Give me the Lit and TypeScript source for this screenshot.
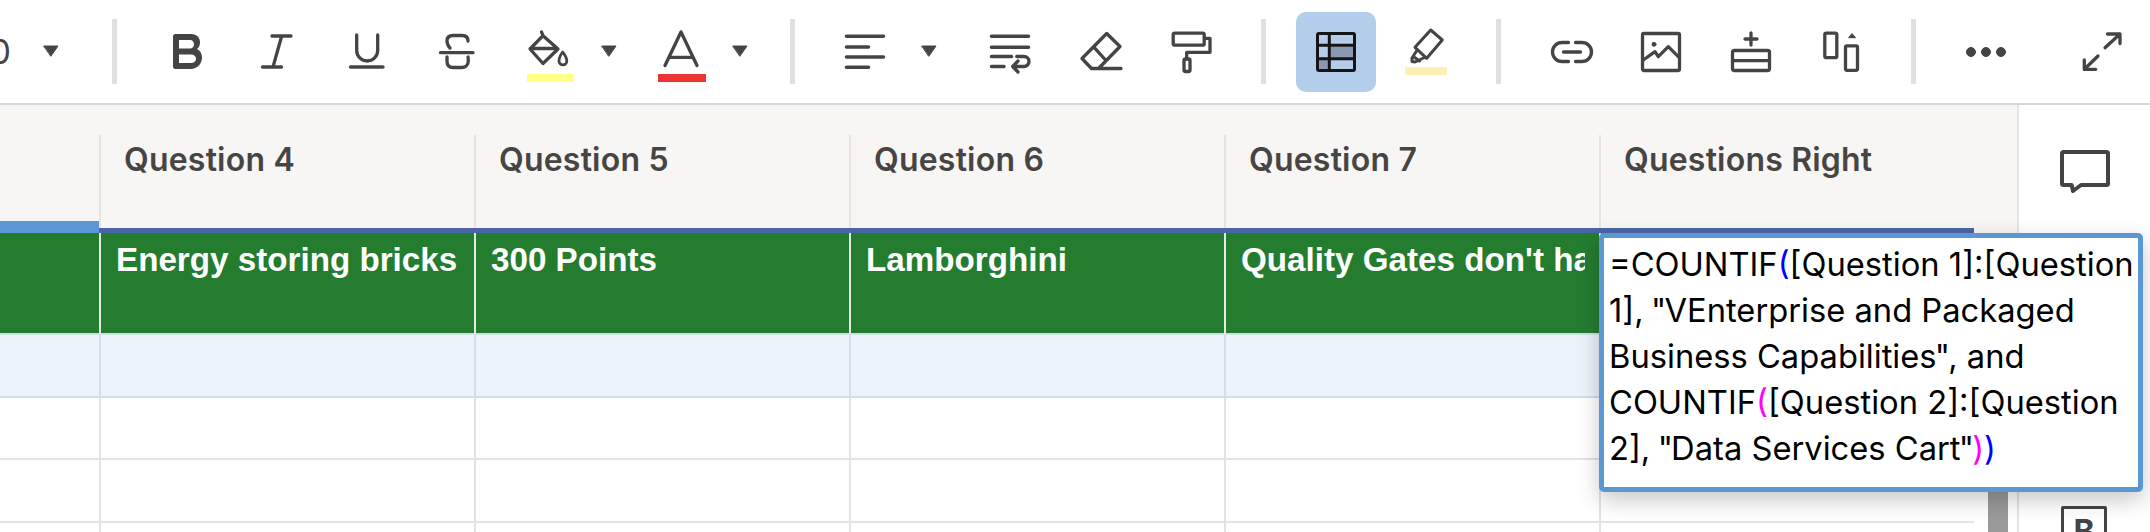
import { LitElement, html, css, svg } from "lit";
import { customElement } from "lit/decorators.js";

const caret = svg`<path class="solid" d="M17 34H31L24 44Z"/>`;

type Item =
  | { kind: "icon"; c: number; art: unknown }
  | { kind: "sep"; left: number }
  | { kind: "active"; c: number; art: unknown };

const ITEMS: Item[] = [
  { kind: "icon", c: 51, art: caret },
  { kind: "sep", left: 112 },
  { kind: "icon", c: 187, art: svg`<path class="solid even" d="M12.5 22H28C34 22 37 26 37 30.5C37 33 36 35.5 34 37C37 38.5 39 41.5 39 45.5C39 52 34 57 28 57H12.5Q10 57 10 54.5V24.5Q10 22 12.5 22ZM16 28V36.5H27C29.5 36.5 31 34.5 31 32.2C31 30 29.5 28 27 28ZM16 42.5V51H28C31 51 33 49 33 46.7C33 44.5 31 42.5 28 42.5Z"/>` },
  { kind: "icon", c: 277, art: svg`<path d="M19 24H38M9.5 55H28.5M28.7 24L20 55"/>` },
  { kind: "icon", c: 367, art: svg`<path d="M13.7 23V38.5a10.5 10.5 0 0 0 21 0V23M7.5 55H40"/>` },
  { kind: "icon", c: 457, art: svg`<path d="M7.5 40.7H40M35 29C35 25.5 33 23.5 29 23.5H20C16 23.5 14 25.5 14 29C14 32 15 34 17 36M35 45C35.3 46.5 35.3 47.5 35.3 49C35.3 53 32.5 55.5 28.5 55.5H20C16 55.5 14 53 14 49V45"/>` },
  { kind: "icon", c: 547, art: svg`<path d="M18.5 20L20 23.7M20 23.7L7 37L20 51.5L35 37ZM9 36.5H33"/><path class="thin" d="M39.7 40C37.5 43 36 46 36 49a3.9 3.9 0 0 0 7.8 0C43.8 46 42 43 39.7 40Z"/><rect class="yellow" x="4" y="62" width="47" height="8"/>` },
  { kind: "icon", c: 609, art: caret },
  { kind: "icon", c: 681, art: svg`<path d="M8 53.5L24 20L40 53.5M13.5 45.3H34.5"/><rect class="red" x="1" y="62" width="48" height="8"/>` },
  { kind: "icon", c: 740, art: caret },
  { kind: "sep", left: 790 },
  { kind: "icon", c: 865, art: svg`<path class="line" d="M5.5 24.3H42.5M5.5 35H27.5M5.5 45H42.5M5.5 55.3H27.5"/>` },
  { kind: "icon", c: 929, art: caret },
  { kind: "icon", c: 1010, art: svg`<path class="line" d="M5.5 24.3H42.5M5.5 35.3H42.5M5.5 44.5H25.5M5.5 54.5H18"/><path d="M30.7 44.5H38a5 5 0 0 1 0 10H27M32 49L26.7 54.5L32 60"/>` },
  { kind: "icon", c: 1101, art: svg`<path d="M29.7 21.5L43 34.5L21.5 56.5H14.5L5 46.5ZM18 36.3L28.5 48M15 56.5H44"/>` },
  { kind: "icon", c: 1191, art: svg`<rect x="6.2" y="21.2" width="31" height="12" rx="1.5"/><path d="M38 26.3H43V40.3H19.7V47"/><rect x="17" y="47" width="6" height="12.5" rx="1.5"/>` },
  { kind: "sep", left: 1261 },
  { kind: "active", c: 1336, art: 0 },
  { kind: "icon", c: 1426, art: svg`<path d="M28.7 18L40.3 28L24.7 46.3L13 35.3ZM15.5 37.5L10 46V49.5L13 50L22.5 45.5M12 45L17.5 49" class="thin2"/><rect class="amber" x="3" y="55" width="42" height="8" rx="2"/>` },
  { kind: "sep", left: 1496 },
  { kind: "icon", c: 1572, art: svg`<path d="M20.5 30.5H14a9.5 9.5 0 0 0 0 19H20.5M27.5 30.5H34a9.5 9.5 0 0 1 0 19H27.5M15.5 40H32.5"/>` },
  { kind: "icon", c: 1661, art: svg`<rect x="5.5" y="21.5" width="37" height="37" rx="1.5"/><circle class="solid" cx="17" cy="32.3" r="2"/><path d="M6.3 48L18 39.7L21.3 44.7L31.3 34.7L41.3 44.7"/>` },
  { kind: "icon", c: 1751, art: svg`<rect x="5.5" y="38.5" width="37" height="20" rx="2"/><path d="M6 48.7H42M24 21V33M18 27H30"/>` },
  { kind: "icon", c: 1841, art: svg`<rect x="7.8" y="21.2" width="12" height="24.5" rx="1.5"/><rect x="28.5" y="33.8" width="12" height="24.5" rx="1.5"/><path class="solid" d="M32 25.7H38.5L35.2 21.8Z"/>` },
  { kind: "sep", left: 1911 },
  { kind: "icon", c: 1986, art: svg`<circle class="solid" cx="9" cy="40" r="4.5"/><circle class="solid" cx="24" cy="40" r="4.5"/><circle class="solid" cx="39" cy="40" r="4.5"/>` },
  { kind: "icon", c: 2102, art: svg`<path d="M27 35.7L42 22M29.5 22H42V31.5M20 44L6.3 57.3M6.3 48V57.3H17.7"/>` },
];

const HEADERS = ["Question 4", "Question 5", "Question 6", "Question 7", "Questions Right"];
const GREEN = ["Energy storing bricks", "300 Points", "Lamborghini", "Quality Gates don't have limits", ""];
const ROWS = [
  { cls: "tint", h: 63 },
  { cls: "", h: 62 },
  { cls: "", h: 63 },
  { cls: "", h: 62 },
];

@customElement("app-root")
export class AppRoot extends LitElement {
  static styles = css`
    :host {
      display: block;
      width: 2150px;
      height: 532px;
      overflow: hidden;
      background: #fff;
      font-family: Inter, "Liberation Sans", sans-serif;
    }
    .toolbar {
      display: flex;
      align-items: flex-start;
      height: 91px;
      padding-top: 12px;
      border-bottom: 2px solid #d6d6d6;
      box-sizing: content-box;
    }
    .zero {
      flex: none;
      width: 11px;
      height: 80px;
      overflow: hidden;
      display: flex;
      justify-content: flex-end;
      align-items: center;
      font-size: 34px;
      color: #444;
      line-height: 80px;
    }
    .sep {
      flex: none;
      width: 5px;
      height: 65px;
      margin-top: 7px;
      background: #e0e0e0;
    }
    .ico {
      flex: none;
      width: 48px;
      height: 80px;
      overflow: visible;
      fill: none;
      stroke: #444;
      stroke-width: 3.3;
      stroke-linecap: round;
      stroke-linejoin: round;
    }
    .ico .solid { fill: #444; stroke-width: 1; }
    .ico .even { fill-rule: evenodd; stroke: none; }
    .ico .thin { stroke-width: 2.8; }
    .ico .thin2 { stroke-width: 3; }
    .ico .line { stroke-width: 3.6; }
    .ico .yellow { fill: #ffff85; stroke: none; }
    .ico .red { fill: #ec3530; stroke: none; }
    .ico .amber { fill: #fdf0b5; stroke: none; }
    .active {
      flex: none;
      width: 80px;
      height: 80px;
      border-radius: 10px;
      background: #b4cdeb;
      display: flex;
      align-items: center;
      justify-content: center;
    }
    .active svg { width: 40px; height: 40px; display: block; }
    .main { display: flex; height: 427px; }
    .grid {
      position: relative;
      flex: none;
      width: 2017px;
      overflow: hidden;
    }
    .hrow {
      display: flex;
      height: 128px;
      background: #f7f6f4;
    }
    .hfirst {
      flex: none;
      width: 99px;
      align-self: flex-end;
      height: 12px;
      background: #5b97d5;
    }
    .hcell {
      flex: none;
      width: 375px;
      box-sizing: border-box;
      padding-top: 30px;
      border-bottom: 5px solid #4c65a4;
    }
    .hbox {
      height: 93px;
      box-sizing: border-box;
      border-left: 2px solid #e4e4e3;
      padding: 5px 0 0 23px;
      font-size: 32px;
      font-weight: 600;
      letter-spacing: 0.2px;
      line-height: 40px;
      color: #474543;
      white-space: nowrap;
    }
    .row { display: flex; }
    .first { flex: none; width: 99px; box-sizing: border-box; border-bottom: 2px solid #e3e3e3; }
    .cell {
      flex: none;
      width: 375px;
      box-sizing: border-box;
      border-left: 2px solid #e3e3e3;
      border-bottom: 2px solid #e3e3e3;
    }
    .row.tint .first, .row.tint .cell {
      background: #ebf3fb;
      border-color: #d4dee9;
    }
    .row.green { height: 102px; }
    .row.green .first, .row.green .cell {
      background: #247d2f;
      border-bottom-color: #d4dee9;
    }
    .row.green .cell { border-left-color: #e4ebe4; }
    .gtext {
      margin: 0 14px 0 15px;
      overflow: hidden;
      white-space: nowrap;
      font-family: "Liberation Sans", Arial, sans-serif;
      font-weight: 700;
      font-size: 33.2px;
      line-height: 46px;
      padding-top: 4px;
      color: #fff;
    }
    .thumb {
      position: absolute;
      left: 1988px;
      top: 280px;
      width: 20px;
      height: 150px;
      background: #9a9a9a;
    }
    .panel {
      flex: 1;
      box-sizing: border-box;
      border-left: 2px solid #e3e3e3;
      padding: 45px 0 0 41px;
      background: #fff;
      overflow: hidden;
    }
    .comment {
      display: block;
      width: 50px;
      height: 43px;
      fill: none;
      stroke: #444;
      stroke-width: 4;
      stroke-linejoin: round;
    }
    .rich {
      box-sizing: border-box;
      width: 46px;
      height: 46px;
      margin: 313px 0 0 1px;
      border: 3.5px solid #444;
      border-radius: 2px;
      text-align: center;
      font-size: 32px;
      font-weight: 700;
      line-height: 46px;
      color: #444;
    }
    .editor {
      position: absolute;
      left: 1599px;
      top: 233px;
      width: 544px;
      height: 259px;
      box-sizing: border-box;
      border: 5px solid #5b97d5;
      border-radius: 5px;
      background: #fff;
      padding: 3px 0 0 5px;
      font-size: 32.7px;
      line-height: 46px;
      color: #000;
      box-shadow: 0 8px 22px rgba(0, 0, 0, 0.22);
    }
    .q { margin: 0 -1.8px; }
    .blue { color: #0000ff; }
    .pink { color: #ff00ff; }
  `;

  private renderItems() {
    let right = 11;
    return ITEMS.map((it) => {
      const w = it.kind === "sep" ? 5 : it.kind === "active" ? 80 : 48;
      const left = it.kind === "sep" ? it.left : it.c - w / 2;
      const ml = `margin-left:${left - right}px`;
      right = left + w;
      if (it.kind === "sep") return html`<div class="sep" style=${ml}></div>`;
      if (it.kind === "active")
        return html`<div class="active" style=${ml}>
          <svg viewBox="0 0 40 40">
            <rect x="1.5" y="14.7" width="11.7" height="10.6" fill="#b4cdeb"></rect>
            <rect x="13.3" y="14.7" width="25.2" height="12" fill="#8a99b0"></rect>
            <rect x="1.5" y="26.7" width="11.8" height="11.8" fill="#8a99b0"></rect>
            <path d="M3 1.5H37Q38.5 1.5 38.5 3V37Q38.5 38.5 37 38.5H3Q1.5 38.5 1.5 37V3Q1.5 1.5 3 1.5ZM13.3 2V38M2 13.3H38M2 26.7H38" fill="none" stroke="#151515" stroke-width="3"></path>
          </svg>
        </div>`;
      return html`<svg class="ico" style=${ml} viewBox="0 0 48 80">${it.art}</svg>`;
    });
  }

  render() {
    return html`
      <div class="toolbar">
        <div class="zero">0</div>
        ${this.renderItems()}
      </div>
      <div class="main">
        <div class="grid">
          <div class="hrow">
            <div class="hfirst"></div>
            ${HEADERS.map((h) => html`<div class="hcell"><div class="hbox">${h}</div></div>`)}
          </div>
          <div class="row green">
            <div class="first"></div>
            ${GREEN.map((t) => html`<div class="cell"><div class="gtext">${t}</div></div>`)}
          </div>
          ${ROWS.map(
            (r) => html`<div class="row ${r.cls}" style="height:${r.h}px">
              <div class="first"></div>
              ${HEADERS.map(() => html`<div class="cell"></div>`)}
            </div>`
          )}
          <div class="thumb"></div>
        </div>
        <div class="panel">
          <svg class="comment" viewBox="0 0 50 43">
            <path d="M3.5 2H46.5Q48 2 48 3.5V33.5Q48 35 46.5 35H21L13 41L11.7 35H3.5Q2 35 2 33.5V3.5Q2 2 3.5 2Z"></path>
          </svg>
          <div class="rich">B</div>
        </div>
      </div>
      <div class="editor">=COUNTIF<span class="blue">(</span>[Question 1]:[Question 1], <span class="q">"</span>VEnterprise and Packaged Business Capabilities<span class="q">"</span>, and COUNTIF<span class="pink">(</span>[Question 2]:[Question 2], <span class="q">"</span>Data Services Cart<span class="q">"</span><span class="pink">)</span><span class="blue">)</span></div>
    `;
  }
}
